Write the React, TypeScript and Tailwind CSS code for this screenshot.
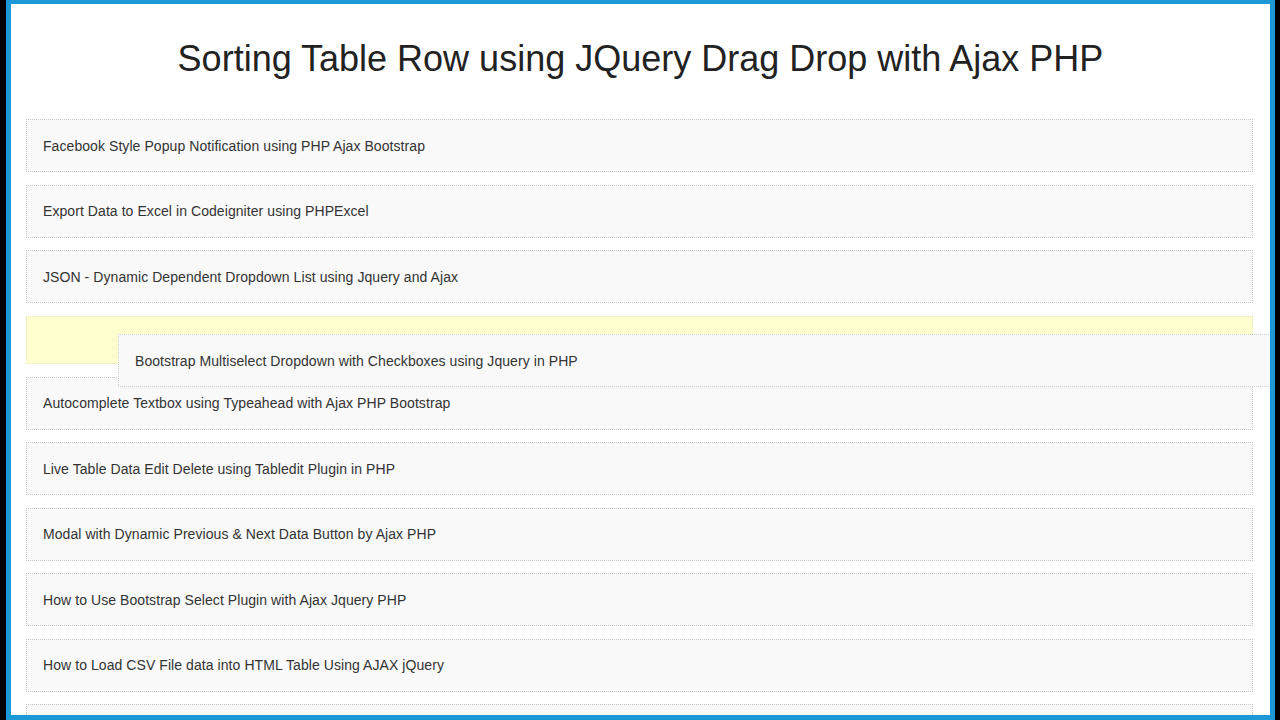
import React from "react";

const rowsBefore = [
  "Facebook Style Popup Notification using PHP Ajax Bootstrap",
  "Export Data to Excel in Codeigniter using PHPExcel",
  "JSON - Dynamic Dependent Dropdown List using Jquery and Ajax",
];

const rowsAfter = [
  "Autocomplete Textbox using Typeahead with Ajax PHP Bootstrap",
  "Live Table Data Edit Delete using Tabledit Plugin in PHP",
  "Modal with Dynamic Previous & Next Data Button by Ajax PHP",
  "How to Use Bootstrap Select Plugin with Ajax Jquery PHP",
  "How to Load CSV File data into HTML Table Using AJAX jQuery",
  "",
];

function Row({ text }: { text: string }) {
  return (
    <div className="h-[53px] mb-[12.5px] shrink-0 flex items-center pl-[16px] bg-[#f9f9f9] border border-dotted border-[#c8c8c8] text-[14px] tracking-[0.07px] text-[#333] leading-[20px]">
      {text}
    </div>
  );
}

export default function App() {
  return (
    <div
      className="w-[1280px] h-[720px] bg-black pl-[6px] pr-[5px] overflow-hidden"
      style={{ fontFamily: '"Liberation Sans", Arial, sans-serif' }}
    >
      <div className="h-full bg-[#1d98d6] pt-[4px] pb-[5px] px-[5px]">
        <div className="relative h-full bg-white overflow-hidden">
          <h1 className="pt-[35px] h-[115px] text-center text-[36px] leading-[40px] text-[#222] font-normal">
            Sorting Table Row using JQuery Drag Drop with Ajax PHP
          </h1>
          <div className="flex flex-col pl-[15px] pr-[17px]">
            {rowsBefore.map((t) => (
              <Row key={t} text={t} />
            ))}
            <div className="h-[48px] mb-[13px] shrink-0 bg-[#ffffcf] border border-dotted border-[#e6e6b8]" />
            {rowsAfter.map((t, i) => (
              <Row key={i} text={t} />
            ))}
          </div>
          <div className="absolute left-[107px] top-[330px] w-[1227px] h-[53px] flex items-center pl-[16px] bg-[#f9f9f9] border border-dotted border-[#d0d0d0] text-[14px] tracking-[0.07px] text-[#333] leading-[20px]">
            Bootstrap Multiselect Dropdown with Checkboxes using Jquery in PHP
          </div>
        </div>
      </div>
    </div>
  );
}
